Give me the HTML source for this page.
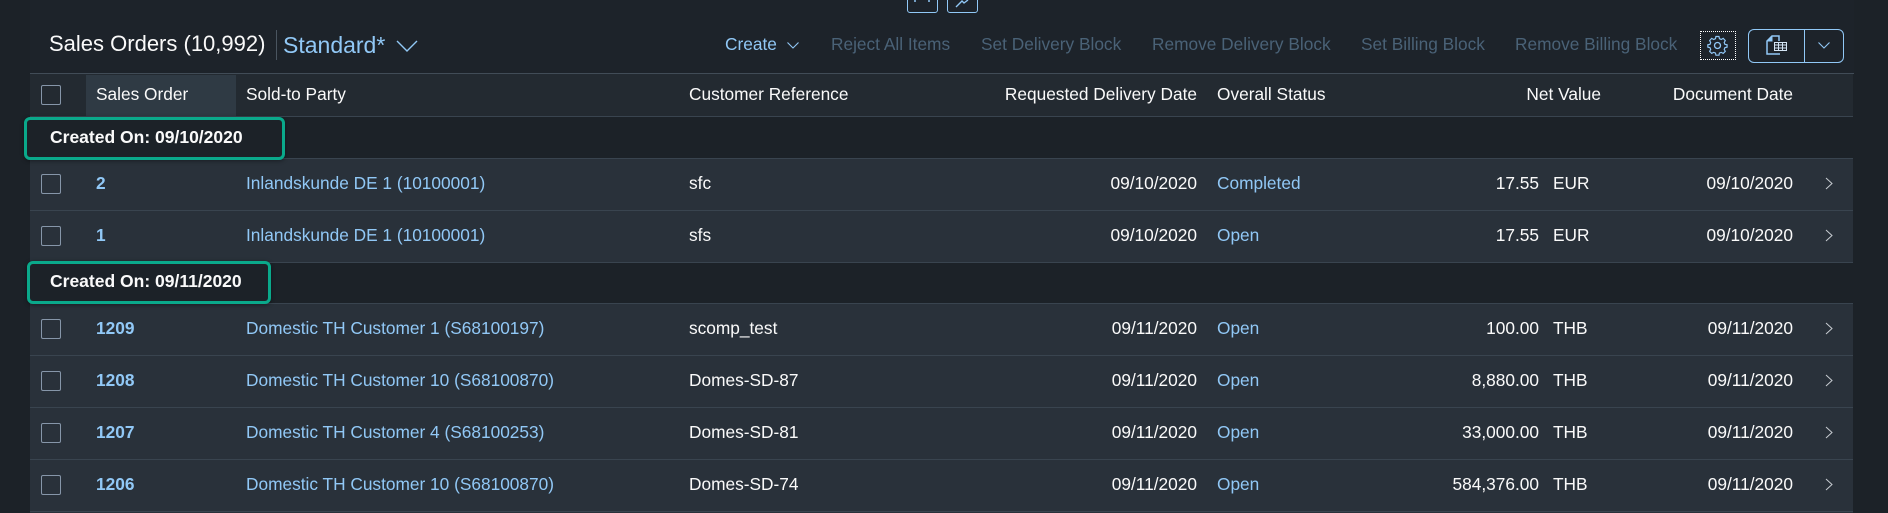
<!DOCTYPE html>
<html><head><meta charset="utf-8"><style>
html,body{margin:0;padding:0;width:1888px;height:513px;overflow:hidden;background:#1c2228}
body{position:relative;font-family:"Liberation Sans",sans-serif;font-size:17.3px;color:#fafafa}
.b{position:absolute}
.t{position:absolute;white-space:nowrap;line-height:20px;height:20px;margin-top:-1px}
.r{text-align:right;transform:translateX(-100%)}
.l{color:#91c8f6}.d{color:#4a6277}
.cb{position:absolute;left:41px;width:18px;height:18px;border:1px solid #8696a9;border-radius:2px}
.line{position:absolute;left:30px;width:1823px;height:1px;background:#39444f}
.row{position:absolute;left:30px;width:1823px;height:51px;background:#29313a}
.box{position:absolute;border:3px solid #0aa98b;border-radius:6px;box-sizing:border-box;background:#1c2228;box-shadow:0 1px 4px rgba(0,0,0,.4)}
svg{position:absolute;overflow:visible}
</style></head><body>
<div class="b" style="left:30px;top:0;width:1824px;height:73px;background:#1d232a"></div>
<div class="b" style="left:907px;top:-8px;width:29px;height:19px;border:1px solid #91c8f6;border-radius:3px"></div>
<div class="b" style="left:947px;top:-8px;width:29px;height:19px;border:1px solid #91c8f6;border-radius:3px"></div>
<svg style="left:913px;top:0" width="18" height="4"><path d="M2 0 V2 M16 0 V2" stroke="#91c8f6" stroke-width="1.5"/></svg>
<svg style="left:953px;top:0" width="18" height="8"><path d="M3 7 L9 1 L11 3 L15 0" fill="none" stroke="#91c8f6" stroke-width="1.4"/></svg>
<div class="t" style="left:49px;top:32px;font-size:22px;line-height:26px;height:26px;">Sales Orders (10,992)</div>
<div class="b" style="left:276px;top:30px;width:1px;height:30px;background:#4a5560"></div>
<div class="t l" style="left:283px;top:33px;font-size:23px;line-height:26px;height:26px">Standard*</div>
<svg style="left:396px;top:40px" width="22" height="12"><path d="M1 1 L11 11 L21 1" fill="none" stroke="#91c8f6" stroke-width="1.4"/></svg>
<div class="t l" style="left:725px;top:35px">Create</div>
<svg style="left:787px;top:42px" width="12" height="7"><path d="M.5 .5 L6 6 L11.5 .5" fill="none" stroke="#91c8f6" stroke-width="1.1"/></svg>
<div class="t d" style="left:831px;top:35px">Reject All Items</div>
<div class="t d" style="left:981px;top:35px">Set Delivery Block</div>
<div class="t d" style="left:1152px;top:35px">Remove Delivery Block</div>
<div class="t d" style="left:1361px;top:35px">Set Billing Block</div>
<div class="t d" style="left:1515px;top:35px">Remove Billing Block</div>
<div class="b" style="left:1700px;top:31px;width:34px;height:27px;border:1px dotted #fff"></div>
<svg style="left:1707px;top:35px" width="21" height="21" viewBox="0 0 21 21"><circle cx="10.5" cy="10.5" r="3" fill="none" stroke="#91c8f6" stroke-width="1.3"/><path d="M8.8 1 h3.4 l.5 2.4 2 .9 2.2-1.2 2.3 2.4-1.2 2.2 .8 2 2.4.5 v2.6 l-2.4.6-.8 1.9 1.2 2.2-2.3 2.3-2.2-1.2-2 .8-.5 2.4 h-3.4 l-.5-2.4-2-.8-2.2 1.2-2.3-2.3 1.2-2.2-.8-1.9-2.4-.6 v-2.6 l2.4-.5 .8-2-1.2-2.2 2.3-2.4 2.2 1.2 2-.9 z" transform="translate(1 .6) scale(.9)" fill="none" stroke="#91c8f6" stroke-width="1.3"/></svg>
<div class="b" style="left:1748px;top:29px;width:94px;height:32px;border:1px solid #91c8f6;border-radius:6px"></div>
<div class="b" style="left:1804px;top:29px;width:1px;height:33px;background:#91c8f6"></div>
<svg style="left:1766px;top:35px" width="22" height="20" viewBox="0 0 22 20"><path d="M13 6 V1 H6 L1 6 V19 H14" fill="none" stroke="#91c8f6" stroke-width="1.5"/><path d="M1 6 H6 V1" fill="#91c8f6" stroke="#91c8f6"/><path d="M8.5 7.5 H20.5 V15.5 H8.5 Z M8.5 10 H20.5 M8.5 13 H20.5 M12.5 7.5 V15.5 M16.5 7.5 V15.5" fill="none" stroke="#d5e6f5" stroke-width="1"/></svg>
<svg style="left:1818px;top:42px" width="12" height="7"><path d="M.5 .5 L6 6 L11.5 .5" fill="none" stroke="#91c8f6" stroke-width="1.1"/></svg>

<div class="line" style="top:73px;width:1824px;background:#414c57"></div>
<div class="b" style="left:30px;top:74px;width:1823px;height:42px;background:#232a31"></div>
<div class="b" style="left:86px;top:75px;width:150px;height:41px;background:#2f3a44"></div>
<div class="line" style="top:116px"></div>
<div class="cb" style="top:85px"></div>
<div class="t" style="left:96px;top:85px">Sales Order</div>
<div class="t" style="left:246px;top:85px">Sold-to Party</div>
<div class="t" style="left:689px;top:85px">Customer Reference</div>
<div class="t r" style="left:1197px;top:85px">Requested Delivery Date</div>
<div class="t" style="left:1217px;top:85px">Overall Status</div>
<div class="t r" style="left:1601px;top:85px">Net Value</div>
<div class="t r" style="left:1793px;top:85px">Document Date</div>

<div class="row" style="top:159px"></div><div class="line" style="top:158px"></div><div class="line" style="top:210px"></div>
<div class="row" style="top:211px"></div><div class="line" style="top:262px"></div>
<div class="row" style="top:304px"></div><div class="line" style="top:303px"></div><div class="line" style="top:355px"></div>
<div class="row" style="top:356px"></div><div class="line" style="top:407px"></div>
<div class="row" style="top:408px"></div><div class="line" style="top:459px"></div>
<div class="row" style="top:460px"></div><div class="line" style="top:511px"></div>
<div class="row" style="top:512px;height:1px"></div>

<div class="box" style="left:24px;top:117px;width:261px;height:43px"></div>
<div class="t" style="left:50px;top:128px;font-weight:bold;font-size:17.5px">Created On: 09/10/2020</div>
<div class="box" style="left:27px;top:261px;width:244px;height:43px"></div>
<div class="t" style="left:50px;top:272px;font-weight:bold;font-size:17.5px">Created On: 09/11/2020</div>

<div class="cb" style="top:174px"></div>
<div class="t l" style="left:96px;top:174px;font-weight:bold">2</div>
<div class="t l" style="left:246px;top:174px">Inlandskunde DE 1 (10100001)</div>
<div class="t" style="left:689px;top:174px">sfc</div>
<div class="t r" style="left:1197px;top:174px">09/10/2020</div>
<div class="t l" style="left:1217px;top:174px">Completed</div>
<div class="t r" style="left:1539px;top:174px">17.55</div>
<div class="t" style="left:1553px;top:174px">EUR</div>
<div class="t r" style="left:1793px;top:174px">09/10/2020</div>
<svg style="left:1825px;top:177px" width="8" height="13"><path d="M1 1 L7 6.5 L1 12" fill="none" stroke="#c8cdd2" stroke-width="1"/></svg>

<div class="cb" style="top:226px"></div>
<div class="t l" style="left:96px;top:226px;font-weight:bold">1</div>
<div class="t l" style="left:246px;top:226px">Inlandskunde DE 1 (10100001)</div>
<div class="t" style="left:689px;top:226px">sfs</div>
<div class="t r" style="left:1197px;top:226px">09/10/2020</div>
<div class="t l" style="left:1217px;top:226px">Open</div>
<div class="t r" style="left:1539px;top:226px">17.55</div>
<div class="t" style="left:1553px;top:226px">EUR</div>
<div class="t r" style="left:1793px;top:226px">09/10/2020</div>
<svg style="left:1825px;top:229px" width="8" height="13"><path d="M1 1 L7 6.5 L1 12" fill="none" stroke="#c8cdd2" stroke-width="1"/></svg>

<div class="cb" style="top:319px"></div>
<div class="t l" style="left:96px;top:319px;font-weight:bold">1209</div>
<div class="t l" style="left:246px;top:319px">Domestic TH Customer 1 (S68100197)</div>
<div class="t" style="left:689px;top:319px">scomp_test</div>
<div class="t r" style="left:1197px;top:319px">09/11/2020</div>
<div class="t l" style="left:1217px;top:319px">Open</div>
<div class="t r" style="left:1539px;top:319px">100.00</div>
<div class="t" style="left:1553px;top:319px">THB</div>
<div class="t r" style="left:1793px;top:319px">09/11/2020</div>
<svg style="left:1825px;top:322px" width="8" height="13"><path d="M1 1 L7 6.5 L1 12" fill="none" stroke="#c8cdd2" stroke-width="1"/></svg>

<div class="cb" style="top:371px"></div>
<div class="t l" style="left:96px;top:371px;font-weight:bold">1208</div>
<div class="t l" style="left:246px;top:371px">Domestic TH Customer 10 (S68100870)</div>
<div class="t" style="left:689px;top:371px">Domes-SD-87</div>
<div class="t r" style="left:1197px;top:371px">09/11/2020</div>
<div class="t l" style="left:1217px;top:371px">Open</div>
<div class="t r" style="left:1539px;top:371px">8,880.00</div>
<div class="t" style="left:1553px;top:371px">THB</div>
<div class="t r" style="left:1793px;top:371px">09/11/2020</div>
<svg style="left:1825px;top:374px" width="8" height="13"><path d="M1 1 L7 6.5 L1 12" fill="none" stroke="#c8cdd2" stroke-width="1"/></svg>

<div class="cb" style="top:423px"></div>
<div class="t l" style="left:96px;top:423px;font-weight:bold">1207</div>
<div class="t l" style="left:246px;top:423px">Domestic TH Customer 4 (S68100253)</div>
<div class="t" style="left:689px;top:423px">Domes-SD-81</div>
<div class="t r" style="left:1197px;top:423px">09/11/2020</div>
<div class="t l" style="left:1217px;top:423px">Open</div>
<div class="t r" style="left:1539px;top:423px">33,000.00</div>
<div class="t" style="left:1553px;top:423px">THB</div>
<div class="t r" style="left:1793px;top:423px">09/11/2020</div>
<svg style="left:1825px;top:426px" width="8" height="13"><path d="M1 1 L7 6.5 L1 12" fill="none" stroke="#c8cdd2" stroke-width="1"/></svg>

<div class="cb" style="top:475px"></div>
<div class="t l" style="left:96px;top:475px;font-weight:bold">1206</div>
<div class="t l" style="left:246px;top:475px">Domestic TH Customer 10 (S68100870)</div>
<div class="t" style="left:689px;top:475px">Domes-SD-74</div>
<div class="t r" style="left:1197px;top:475px">09/11/2020</div>
<div class="t l" style="left:1217px;top:475px">Open</div>
<div class="t r" style="left:1539px;top:475px">584,376.00</div>
<div class="t" style="left:1553px;top:475px">THB</div>
<div class="t r" style="left:1793px;top:475px">09/11/2020</div>
<svg style="left:1825px;top:478px" width="8" height="13"><path d="M1 1 L7 6.5 L1 12" fill="none" stroke="#c8cdd2" stroke-width="1"/></svg>
</body></html>
